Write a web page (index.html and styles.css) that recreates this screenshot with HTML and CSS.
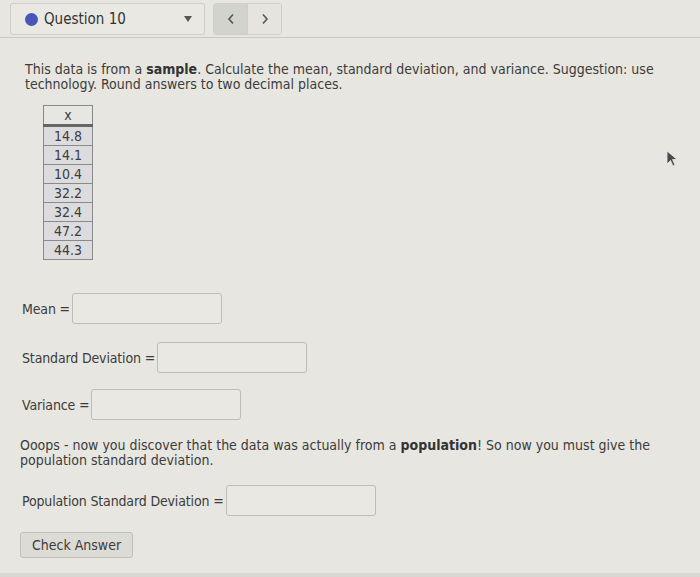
FILE: index.html
```html
<!DOCTYPE html>
<html>
<head>
<meta charset="utf-8">
<link rel="stylesheet" href="styles.css">
</head>
<body>
<div class="page">
  <div class="topbar">
    <div class="select">
      <span class="dot"></span>
      <span class="qtitle">Question 10</span>
      <span class="caret"></span>
    </div>
    <div class="nav">
      <span class="navbtn prev"><svg width="8" height="12" viewBox="0 0 8 12"><path d="M6 1.5 L2 6 L6 10.5" fill="none" stroke="#555" stroke-width="1.6"/></svg></span>
      <span class="navbtn next"><svg width="8" height="12" viewBox="0 0 8 12"><path d="M2 1.5 L6 6 L2 10.5" fill="none" stroke="#555" stroke-width="1.6"/></svg></span>
    </div>
  </div>
  <div class="content">
    <p class="intro">This data is from a <b>sample</b>. Calculate the mean, standard deviation, and variance. Suggestion: use technology. Round answers to two decimal places.</p>
    <table class="data">
      <thead><tr><th>x</th></tr></thead>
      <tbody>
        <tr><td>14.8</td></tr>
        <tr><td>14.1</td></tr>
        <tr><td>10.4</td></tr>
        <tr><td>32.2</td></tr>
        <tr><td>32.4</td></tr>
        <tr><td>47.2</td></tr>
        <tr><td>44.3</td></tr>
      </tbody>
    </table>
    <div class="field f-mean"><span class="lbl">Mean =</span><span class="box"></span></div>
    <div class="field f-sd"><span class="lbl">Standard Deviation =</span><span class="box"></span></div>
    <div class="field f-var"><span class="lbl">Variance =</span><span class="box"></span></div>
    <p class="oops">Ooops - now you discover that the data was actually from a <b>population</b>! So now you must give the population standard deviation.</p>
    <div class="field f-pop"><span class="lbl">Population Standard Deviation =</span><span class="box"></span></div>
    <button class="check">Check Answer</button>
  </div>
  <div class="bottom"></div>
  <svg class="cursor" width="14" height="18" viewBox="0 0 14 18"><path d="M1 1 L1 14 L4.5 10.5 L7 16 L9 15 L6.5 9.5 L11 9.5 Z" fill="#4a4a4e" stroke="#e8e8e4" stroke-width="0.8"/></svg>
</div>
</body>
</html>
```
FILE: styles.css
```css
html, body { margin: 0; padding: 0; }
body {
  background: #e7e6e0;
  font-family: "DejaVu Sans", sans-serif;
  font-stretch: condensed;
  color: #3c3c3c;
  font-size: 14px;
  width: 700px;
  height: 577px;
  overflow: hidden;
}
.page { position: relative; width: 700px; height: 577px; display: flex; flex-direction: column; }
.topbar {
  display: flex;
  align-items: center;
  gap: 8px;
  padding: 3px 0 2px 10px;
  border-bottom: 1px solid #c9c8c2;
  height: 32px;
}
.select {
  width: 195px;
  height: 32px;
  border: 1px solid #cfcec8;
  border-radius: 3px;
  background: #e9e8e2;
  display: flex;
  align-items: center;
  padding: 0 12px 0 14px;
  box-sizing: border-box;
}
.dot { width: 13px; height: 13px; border-radius: 50%; background: #4a55b8; margin-right: 6px; }
.qtitle { font-size: 15px; color: #333; flex: 1; }
.caret { width: 0; height: 0; border-left: 4px solid transparent; border-right: 4px solid transparent; border-top: 6px solid #555; }
.nav { display: flex; border: 1px solid #cfcec8; border-radius: 3px; height: 30px; overflow: hidden; }
.navbtn { width: 33px; display: flex; align-items: center; justify-content: center; }
.prev { background: #d3d3ce; }
.next { background: #e5e4de; border-left: 1px solid #cfcec8; }
.content { padding: 0 20px; flex: 1; }
.intro { margin: 24px 0 0 5px; line-height: 15px; width: 640px; }
b { font-weight: bold; color: #333; }
.data {
  border-collapse: collapse;
  margin: 13px 0 0 23px;
  width: 50px;
  font-size: 14px;
}
.data th {
  font-weight: normal;
  background: #e6e7e3;
  border: 1px solid #888;
  border-bottom: 3px solid #666;
  height: 18px;
  padding: 0;
}
.data td {
  background: #dcdcdf;
  border: 1px solid #8a8a8a;
  text-align: center;
  height: 18px;
  padding: 0;
}
.field { display: flex; align-items: center; gap: 2px; margin-left: 2px; }
.lbl { letter-spacing: -0.15px; }
.box { width: 148px; height: 29px; border: 1px solid #bdbcb6; border-radius: 3px; background: #e9e8e3; }
.f-mean { margin-top: 33px; }
.f-sd { margin-top: 18px; }
.f-var { margin-top: 16px; }
.oops { margin: 18px 0 0 0; line-height: 15px; width: 640px; }
.f-pop { margin-top: 17px; }
.check {
  display: block;
  margin-top: 16px;
  font-family: inherit;
  font-stretch: condensed;
  font-size: 14px;
  color: #3c3c3c;
  background: #dcdbd5;
  border: 1px solid #c0bfb9;
  border-radius: 3px;
  width: 113px;
  height: 26px;
}
.bottom { height: 4px; background: #d8d7d1; }
.cursor { position: absolute; left: 666px; top: 150px; }
```
